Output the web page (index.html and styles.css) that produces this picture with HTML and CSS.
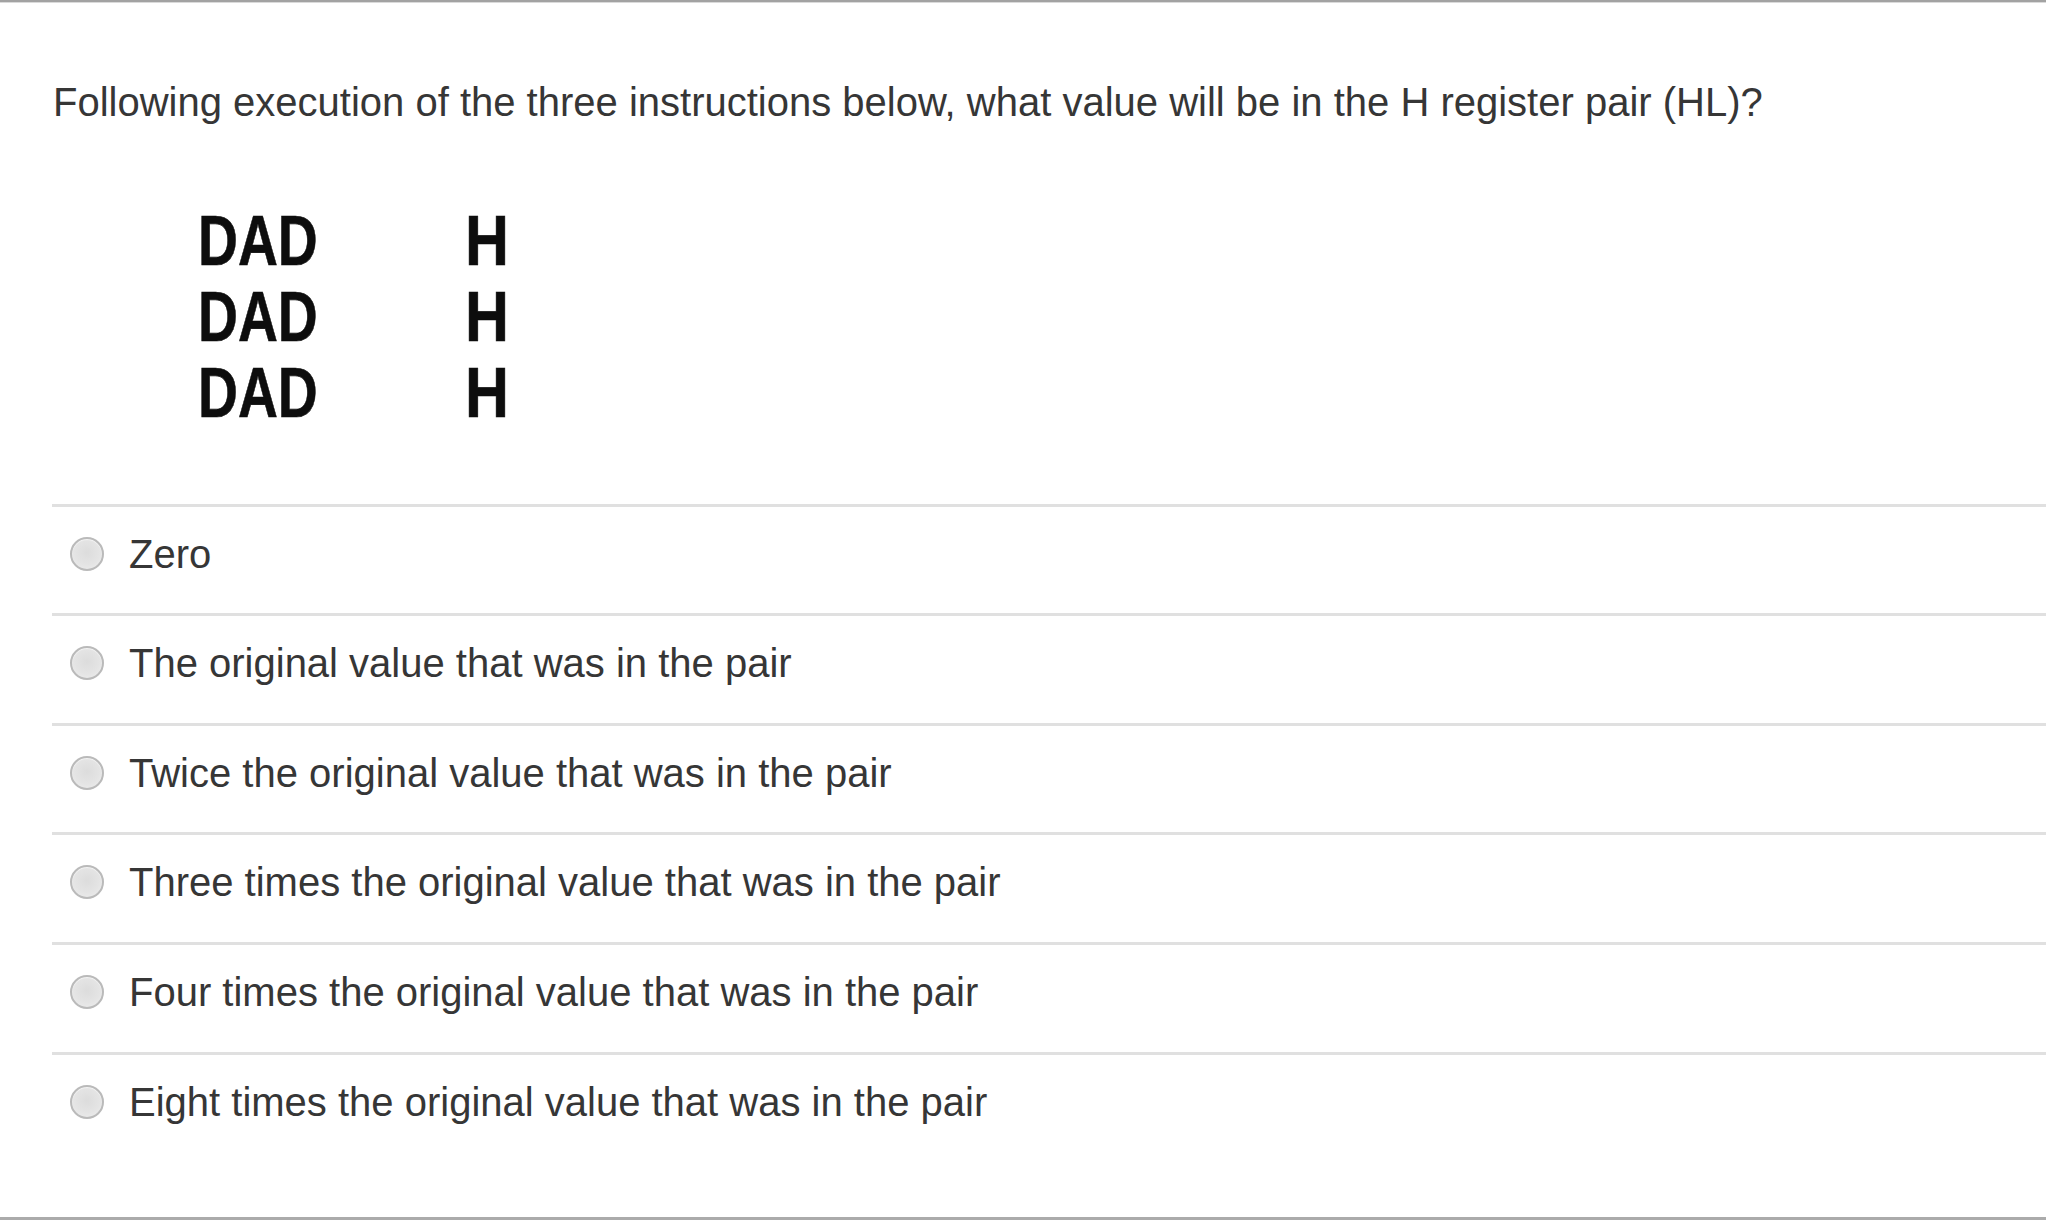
FILE: index.html
```html
<!DOCTYPE html>
<html lang="en">
<head>
<meta charset="utf-8">
<title>Question</title>
<link rel="stylesheet" href="styles.css">
</head>
<body>
<div class="page">
  <p class="question">Following execution of the three instructions below, what value will be in the H register pair (HL)?</p>
  <div class="code">
    <span class="op">DAD</span><span class="arg">H</span>
    <span class="op">DAD</span><span class="arg">H</span>
    <span class="op">DAD</span><span class="arg">H</span>
  </div>
  <ul class="options">
    <li class="option"><span class="radio"></span><span class="label">Zero</span></li>
    <li class="option"><span class="radio"></span><span class="label">The original value that was in the pair</span></li>
    <li class="option"><span class="radio"></span><span class="label">Twice the original value that was in the pair</span></li>
    <li class="option"><span class="radio"></span><span class="label">Three times the original value that was in the pair</span></li>
    <li class="option"><span class="radio"></span><span class="label">Four times the original value that was in the pair</span></li>
    <li class="option"><span class="radio"></span><span class="label">Eight times the original value that was in the pair</span></li>
  </ul>
</div>
</body>
</html>
```

FILE: styles.css
```css
html, body {
  margin: 0;
  padding: 0;
  background: #ffffff;
}

.page {
  box-sizing: border-box;
  height: 1220px;
  border-top: 2px solid #a2a2a2;
  border-bottom: 3px solid #ababab;
  box-shadow: inset 0 1px 0 #dadada;
  padding-left: 53px;
  font-family: "Liberation Sans", Arial, sans-serif;
  color: #363636;
}

.question {
  margin: 0;
  padding-top: 77px;
  font-size: 40px;
  line-height: 47.6px;
  white-space: nowrap;
}

.code {
  display: grid;
  grid-template-columns: 267px auto;
  margin: 76px 0 0 145px;
  font-size: 70px;
  line-height: 76px;
  font-weight: bold;
  color: #0d0d0d;
}

.op, .arg {
  display: inline-block;
  transform-origin: left center;
  -webkit-text-stroke: 0.6px #0d0d0d;
}

.op {
  transform: scaleX(0.79);
}

.arg {
  transform: scaleX(0.87);
}

.options {
  list-style: none;
  margin: 73px 0 0 -1px;
  padding: 0;
}

.option {
  box-sizing: border-box;
  height: 109.6px;
  border-top: 3px solid #e0e0e0;
  padding: 23px 0 0 18px;
  display: flex;
  align-items: flex-start;
  font-size: 40px;
  line-height: 48px;
}

.radio {
  box-sizing: border-box;
  flex: none;
  width: 34px;
  height: 34px;
  margin-top: 7px;
  margin-right: 25px;
  border-radius: 50%;
  border: 2px solid #bababa;
  background: radial-gradient(circle at 50% 45%, #dcdcdc 0, #e4e4e4 55%, #efefef 100%);
  box-shadow: inset 0 1px 1px rgba(255, 255, 255, 0.6);
}

.label {
  white-space: nowrap;
}
```
